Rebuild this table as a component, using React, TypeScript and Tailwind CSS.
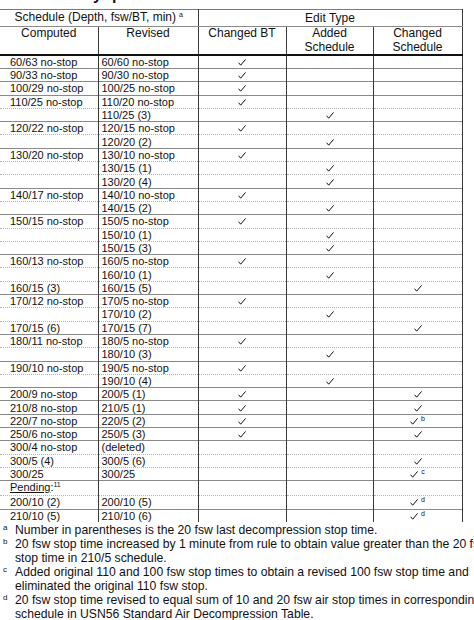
import React from "react";

type Row = {
  c: string;
  r: string;
  bt?: boolean;
  add?: boolean;
  ch?: boolean;
  sup?: string;
  dotted?: boolean;
  pending?: boolean;
};

const rows: Row[] = [
  { c: "60/63 no-stop", r: "60/60 no-stop", bt: true },
  { c: "90/33 no-stop", r: "90/30 no-stop", bt: true },
  { c: "100/29 no-stop", r: "100/25 no-stop", bt: true },
  { c: "110/25 no-stop", r: "110/20 no-stop", bt: true },
  { c: "", r: "110/25 (3)", add: true, dotted: true },
  { c: "120/22 no-stop", r: "120/15 no-stop", bt: true },
  { c: "", r: "120/20 (2)", add: true, dotted: true },
  { c: "130/20 no-stop", r: "130/10 no-stop", bt: true },
  { c: "", r: "130/15 (1)", add: true, dotted: true },
  { c: "", r: "130/20 (4)", add: true, dotted: true },
  { c: "140/17 no-stop", r: "140/10 no-stop", bt: true },
  { c: "", r: "140/15 (2)", add: true, dotted: true },
  { c: "150/15 no-stop", r: "150/5 no-stop", bt: true },
  { c: "", r: "150/10 (1)", add: true, dotted: true },
  { c: "", r: "150/15 (3)", add: true, dotted: true },
  { c: "160/13 no-stop", r: "160/5 no-stop", bt: true },
  { c: "", r: "160/10 (1)", add: true, dotted: true },
  { c: "160/15 (3)", r: "160/15 (5)", ch: true, dotted: true },
  { c: "170/12 no-stop", r: "170/5 no-stop", bt: true },
  { c: "", r: "170/10 (2)", add: true, dotted: true },
  { c: "170/15 (6)", r: "170/15 (7)", ch: true, dotted: true },
  { c: "180/11 no-stop", r: "180/5 no-stop", bt: true },
  { c: "", r: "180/10 (3)", add: true, dotted: true },
  { c: "190/10 no-stop", r: "190/5 no-stop", bt: true },
  { c: "", r: "190/10 (4)", add: true, dotted: true },
  { c: "200/9 no-stop", r: "200/5 (1)", bt: true, ch: true },
  { c: "210/8 no-stop", r: "210/5 (1)", bt: true, ch: true },
  { c: "220/7 no-stop", r: "220/5 (2)", bt: true, ch: true, sup: "b" },
  { c: "250/6 no-stop", r: "250/5 (3)", bt: true, ch: true },
  { c: "300/4 no-stop", r: "(deleted)" },
  { c: "300/5 (4)", r: "300/5 (6)", ch: true, dotted: true },
  { c: "300/25", r: "300/25", ch: true, sup: "c", dotted: true },
  { c: "", r: "", pending: true },
  { c: "200/10 (2)", r: "200/10 (5)", ch: true, sup: "d", dotted: true },
  { c: "210/10 (5)", r: "210/10 (6)", ch: true, sup: "d" },
];

const Check = () => (
  <svg width="8" height="7" viewBox="0 0 8 7" className="inline-block">
    <path
      d="M0.8 4 L2.7 6.2 L7.3 0.7"
      fill="none"
      stroke="#111"
      strokeWidth="1"
      strokeLinejoin="round"
      strokeLinecap="round"
    />
  </svg>
);

const CheckMark = ({ sup }: { sup?: string }) =>
  sup ? (
    <span className="inline-flex items-start">
      <Check />
      <span className="ml-[3px] -mt-[3px] text-[7px] leading-[7px]">{sup}</span>
    </span>
  ) : (
    <span className="inline-flex">
      <Check />
    </span>
  );

const Footnote = ({ mark, lines }: { mark: string; lines: string[] }) => (
  <div className="flex">
    <span className="w-[15px] shrink-0 pl-[3px] text-[8px] leading-[9px]">{mark}</span>
    <div>
      {lines.map((l, i) => (
        <div key={i} className="whitespace-nowrap">
          {l}
        </div>
      ))}
    </div>
  </div>
);

export default function App() {
  const vline = "border-r border-r-[#3a3a3a]";
  return (
    <div className="w-[474px] h-[620px] overflow-hidden bg-white text-[#111] font-['Liberation_Sans',Arial,sans-serif]">
      <div className="h-[9px] overflow-hidden">
        <div className="-mt-[13px] pl-[93px] whitespace-nowrap text-[16px] leading-[16px] font-bold">
          <span>y</span>
          <span className="ml-[10px]">p</span>
        </div>
      </div>
      <table className="w-[462px] table-fixed border-collapse">
        <colgroup>
          <col className="w-[98px]" />
          <col className="w-[100px]" />
          <col className="w-[88px]" />
          <col className="w-[87px]" />
          <col className="w-[89px]" />
        </colgroup>
        <thead>
          <tr>
            <th
              colSpan={2}
              className={`p-0 h-[14px] text-center text-[12px] leading-[14px] font-normal border-t border-t-[#7a7a7a] border-b border-b-[#8a8a8a] ${vline}`}
            >
              Schedule (Depth, fsw/BT, min)
              <span className="relative -top-[4px] ml-[3px] text-[7px]">a</span>
            </th>
            <th
              colSpan={3}
              className={`p-0 h-[14px] text-center text-[12px] leading-[14px] font-normal border-t border-t-[#7a7a7a] border-b border-b-[#8a8a8a] ${vline}`}
            >
              Edit Type
            </th>
          </tr>
          <tr>
            {["Computed", "Revised", "Changed BT", "Added\nSchedule", "Changed\nSchedule"].map((h, i) => (
              <th
                key={i}
                className={`p-0 h-[27px] align-top text-center text-[12px] leading-[13.5px] font-normal whitespace-pre-line border-b-2 border-b-[#111] ${vline}`}
              >
                {h}
              </th>
            ))}
          </tr>
        </thead>
        <tbody>
          {rows.map((row, i) => {
            const top = row.dotted
              ? "border-t border-t-[#b5b5b5] [border-top-style:dotted]"
              : "border-t border-t-[#8a8a8a]";
            const cell = `p-0 h-[13.3px] align-middle text-[11px] leading-[12px] whitespace-nowrap ${top} ${vline}`;
            return (
              <tr key={i}>
                <td className={`${cell} pl-[10px]`}>
                  {row.pending ? (
                    <span>
                      <span className="underline">Pending</span>:
                      <span className="relative -top-[4px] text-[7px]">11</span>
                    </span>
                  ) : (
                    row.c
                  )}
                </td>
                <td className={`${cell} pl-[3px]`}>{row.r}</td>
                <td className={`${cell} text-center`}>{row.bt ? <CheckMark /> : null}</td>
                <td className={`${cell} text-center`}>{row.add ? <CheckMark /> : null}</td>
                <td className={`${cell} text-center`}>{row.ch ? <CheckMark sup={row.sup} /> : null}</td>
              </tr>
            );
          })}
        </tbody>
      </table>
      <div className="pt-[1px] text-[12.2px] leading-[14px]">
        <Footnote mark="a" lines={["Number in parentheses is the 20 fsw last decompression stop time."]} />
        <Footnote
          mark="b"
          lines={[
            "20 fsw stop time increased by 1 minute from rule to obtain value greater than the 20 fsw",
            "stop time in 210/5 schedule.",
          ]}
        />
        <Footnote
          mark="c"
          lines={[
            "Added original 110 and 100 fsw stop times to obtain a revised 100 fsw stop time and",
            "eliminated the original 110 fsw stop.",
          ]}
        />
        <Footnote
          mark="d"
          lines={[
            "20 fsw stop time revised to equal sum of 10 and 20 fsw air stop times in corresponding",
            "schedule in USN56 Standard Air Decompression Table.",
          ]}
        />
      </div>
    </div>
  );
}
